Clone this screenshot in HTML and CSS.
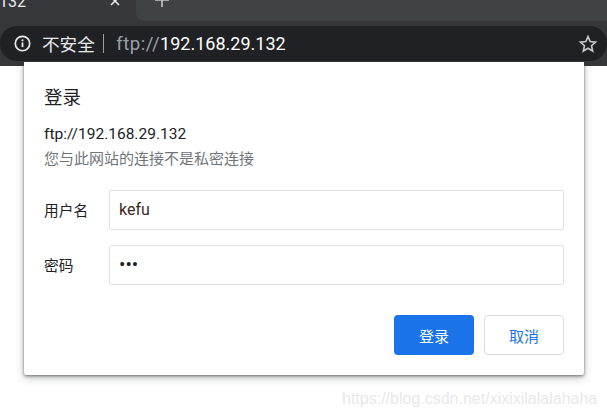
FILE: index.html
```html
<!DOCTYPE html>
<html lang="zh-CN">
<head>
<meta charset="utf-8">
<title>登录</title>
<link rel="stylesheet" href="styles.css">
</head>
<body>
<header class="chrome">
  <div class="tabstrip">
    <div class="tab">
      <span class="tab-title">132</span>
      <svg class="tab-close" width="12" height="12" viewBox="0 0 12 12"><path d="M2 2l8 8M10 2l-8 8" stroke="#e8eaed" stroke-width="1.6" fill="none"/></svg>
    </div>
    <div class="tab-rest">
      <svg class="tab-new" width="14" height="14" viewBox="0 0 14 14"><path d="M7 0v14M0 7h14" stroke="#c4c6c9" stroke-width="1.6" fill="none"/></svg>
    </div>
  </div>
  <div class="toolbar">
    <div class="omnibox">
      <svg class="info" width="17" height="17" viewBox="0 0 16 16"><circle cx="8" cy="8" r="6.8" stroke="#e8eaed" stroke-width="1.6" fill="none"/><path d="M8 7v4.4" stroke="#e8eaed" stroke-width="1.7"/><circle cx="8" cy="5" r="1" fill="#e8eaed"/></svg>
      <span class="insecure">不安全</span>
      <span class="sep"></span>
      <span class="scheme">ftp://</span><span class="host">192.168.29.132</span>
      <svg class="star" width="20" height="20" viewBox="0 0 20 20"><path d="M10 2.6l2.2 5 5.4.5-4.1 3.6 1.2 5.3L10 14.2 5.3 17l1.2-5.3-4.1-3.6 5.4-.5z" stroke="#c6c8cb" stroke-width="1.6" fill="none"/></svg>
    </div>
  </div>
</header>
<main class="page">
  <span class="watermark">https://blog.csdn.net/xixixilalalahaha</span>
</main>
<form class="dialog">
  <h1 class="title">登录</h1>
  <p class="origin">ftp://192.168.29.132</p>
  <p class="warning">您与此网站的连接不是私密连接</p>
  <div class="fields">
    <label class="row"><span class="label">用户名</span><span class="input">kefu</span></label>
    <label class="row"><span class="label">密码</span><span class="input dots">•••</span></label>
  </div>
  <div class="actions">
    <span class="btn primary">登录</span>
    <span class="btn secondary">取消</span>
  </div>
</form>
</body>
</html>
```
FILE: styles.css
```css
* { box-sizing: border-box; }
html, body { margin: 0; height: 100%; }
body {
  width: 607px;
  height: 417px;
  overflow: hidden;
  background: #fff;
  font-family: Roboto, "Noto Sans CJK SC", sans-serif;
  position: relative;
  display: flex;
  flex-direction: column;
}
.chrome { background: #35373a; height: 66px; flex: none; }
.tabstrip { display: flex; height: 21px; background: #35373a; overflow: hidden; }
.tab { width: 136px; position: relative; }
.tab-title { position: absolute; left: -1px; top: -8px; color: #e8eaed; font-size: 16px; line-height: 20px; }
.tab-close { position: absolute; left: 109px; top: -5px; }
.tab-rest { flex: 1; background: #3f4346; border-bottom-left-radius: 8px; position: relative; }
.tab-new { position: absolute; left: 19px; top: -7px; }
.toolbar { padding-top: 5px; }
.omnibox {
  height: 35px;
  background: #202124;
  border-radius: 17px;
  display: flex;
  align-items: center;
  padding-left: 14px;
  padding-right: 9px;
}
.info { flex: none; margin-right: 11px; }
.insecure { color: #e8eaed; font-size: 17.6px; font-family: "Noto Sans CJK SC", sans-serif; }
.sep { width: 1.5px; height: 19px; background: #9aa0a6; margin: 0 12px 0 8px; }
.scheme { color: #9aa0a6; font-size: 18.6px; letter-spacing: 0.5px; }
.host { color: #fff; font-size: 18px; }
.star { margin-left: auto; }
.page { flex: 1; position: relative; }
.watermark { position: absolute; left: 342px; top: 324px; color: #e8e8e8; font-family: "Liberation Sans", sans-serif; font-size: 16px; white-space: nowrap; }
.dialog {
  position: absolute;
  left: 24px;
  top: 62px;
  width: 560px;
  height: 313px;
  background: #fff;
  border-radius: 0 0 2px 2px;
  box-shadow: 0 1px 3px rgba(60,64,67,.7), 0 3px 8px rgba(60,64,67,.3);
  padding: 22px 20px 20px;
  color: #202124;
}
.title { margin: 0; font-size: 18.5px; font-weight: 400; line-height: 24px; font-family: "Noto Sans CJK SC", sans-serif; }
.origin { margin: 16px 0 0; font-size: 15.5px; line-height: 20px; }
.warning { margin: 4px 0 0; font-size: 15px; line-height: 20px; color: #70757a; font-family: "Noto Sans CJK SC", sans-serif; }
.fields { margin-top: 22px; display: flex; flex-direction: column; gap: 15px; }
.row { display: flex; align-items: center; }
.label { width: 65px; font-size: 14.7px; line-height: 18px; font-family: "Noto Sans CJK SC", sans-serif; }
.input {
  flex: 1;
  height: 40px;
  border: 1px solid #dfe1e5;
  border-radius: 2px;
  padding-left: 9px;
  font-size: 16px;
  line-height: 38px;
  color: #3c2a1e;
}
.dots { font-size: 19px; color: #202124; }
.actions { margin-top: 30px; display: flex; justify-content: flex-end; gap: 10px; }
.btn { width: 80px; height: 40px; border-radius: 4px; display: flex; align-items: center; justify-content: center; font-size: 15px; font-family: "Noto Sans CJK SC", sans-serif; }
.primary { background: #1a73e8; color: #fff; }
.secondary { border: 1px solid #dadce0; color: #1a73e8; }
```
